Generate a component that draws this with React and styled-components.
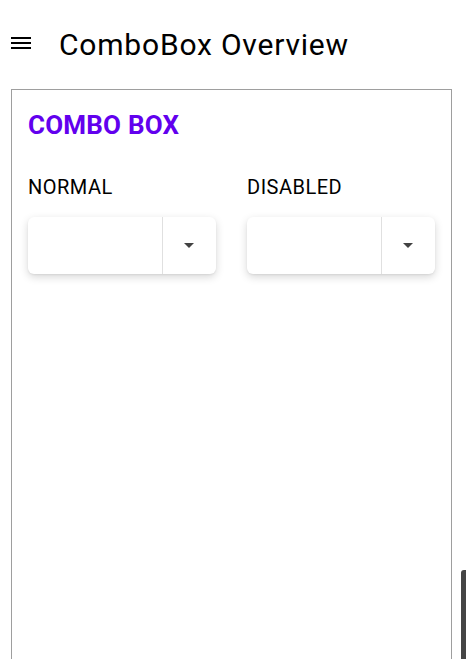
import React from "react";
import styled, { createGlobalStyle } from "styled-components";

const GlobalStyle = createGlobalStyle`
  html, body {
    margin: 0;
    padding: 0;
    background: #ffffff;
    font-family: Roboto, "Liberation Sans", sans-serif;
    overflow: hidden;
  }
`;

const Page = styled.div`
  position: relative;
  width: 466px;
  height: 659px;
  overflow: hidden;
  background: #ffffff;
`;

const Toolbar = styled.div`
  display: flex;
  align-items: center;
  height: 88px;
  padding-left: 11px;
  box-sizing: border-box;
`;

const MenuIcon = styled.svg`
  width: 20px;
  height: 14px;
  flex-shrink: 0;
`;

const Title = styled.h1`
  margin: 0 0 0 28px;
  font-size: 30px;
  font-weight: 400;
  color: #000000;
  letter-spacing: 0.8px;
`;

const Card = styled.div`
  margin: 1px 0 0 11px;
  width: 441px;
  height: 600px;
  border: 1px solid #9e9e9e;
  box-sizing: border-box;
  padding: 19px 16px 0 16px;
`;

const CardTitle = styled.h2`
  margin: 0;
  font-size: 26px;
  font-weight: 700;
  color: #6200ee;
  line-height: 32px;
  letter-spacing: 0.2px;
`;

const Columns = styled.div`
  display: grid;
  grid-template-columns: 188px 188px;
  column-gap: 31px;
  margin-top: 34px;
`;

const Field = styled.div`
  display: flex;
  flex-direction: column;
`;

const Label = styled.div`
  font-size: 20px;
  color: #000000;
  line-height: 24px;
  letter-spacing: 0.5px;
  margin-bottom: 18px;
`;

const Combo = styled.div`
  display: flex;
  height: 57px;
  background: #ffffff;
  border-radius: 6px;
  box-shadow: 0 3px 8px rgba(0, 0, 0, 0.16), 0 1px 2px rgba(0, 0, 0, 0.06);
`;

const ComboInput = styled.div`
  flex: 1;
`;

const ComboButton = styled.div`
  width: 53px;
  border-left: 1px solid #e0e0e0;
  display: flex;
  align-items: center;
  justify-content: center;
`;

const Arrow = styled.div`
  width: 0;
  height: 0;
  margin-right: 1px;
  border-left: 5px solid transparent;
  border-right: 5px solid transparent;
  border-top: 5px solid #424242;
`;

const EdgeTab = styled.div`
  position: absolute;
  right: 0;
  bottom: 0;
  width: 5px;
  height: 89px;
  background: #454545;
  border-top-left-radius: 3px;
`;

const ComboBox = () => (
  <Combo>
    <ComboInput />
    <ComboButton>
      <Arrow />
    </ComboButton>
  </Combo>
);

export default function App() {
  return (
    <Page>
      <GlobalStyle />
      <Toolbar>
        <MenuIcon viewBox="0 0 20 14">
          <rect x="0" y="0" width="20" height="2" fill="#000" />
          <rect x="0" y="5" width="20" height="2" fill="#000" />
          <rect x="0" y="10" width="20" height="2" fill="#000" />
        </MenuIcon>
        <Title>ComboBox Overview</Title>
      </Toolbar>
      <Card>
        <CardTitle>COMBO BOX</CardTitle>
        <Columns>
          <Field>
            <Label>NORMAL</Label>
            <ComboBox />
          </Field>
          <Field>
            <Label>DISABLED</Label>
            <ComboBox />
          </Field>
        </Columns>
      </Card>
      <EdgeTab />
    </Page>
  );
}
